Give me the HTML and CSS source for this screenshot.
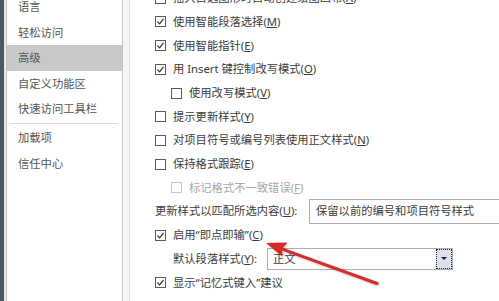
FILE: index.html
```html
<!DOCTYPE html>
<html lang="zh-CN">
<head>
  <meta charset="UTF-8">
  <title>Word 选项 - 高级</title>
  <link rel="stylesheet" href="styles.css">
</head>
<body>
  <div class="window">
    <div class="edge"></div>

    <!-- left navigation -->
    <nav class="sidebar">
      <div class="nav-item">语言</div>
      <div class="nav-item">轻松访问</div>
      <div class="nav-item active">高级</div>
      <div class="nav-item">自定义功能区</div>
      <div class="nav-item">快速访问工具栏</div>
      <div class="nav-sep"></div>
      <div class="nav-item">加载项</div>
      <div class="nav-item">信任中心</div>
    </nav>

    <div class="splitter"></div>

    <!-- editing options -->
    <main class="options">
      <div class="row">
        <span class="box"></span>
        <span>插入自选图形时自动创建绘图画布(<u>A</u>)</span>
      </div>
      <div class="row">
        <span class="box checked"><svg viewBox="0 0 9 9"><polyline points="1.5,4.5 3.6,6.8 7.6,1.8"/></svg></span>
        <span>使用智能段落选择(<u>M</u>)</span>
      </div>
      <div class="row">
        <span class="box checked"><svg viewBox="0 0 9 9"><polyline points="1.5,4.5 3.6,6.8 7.6,1.8"/></svg></span>
        <span>使用智能指针(<u>E</u>)</span>
      </div>
      <div class="row">
        <span class="box checked"><svg viewBox="0 0 9 9"><polyline points="1.5,4.5 3.6,6.8 7.6,1.8"/></svg></span>
        <span>用 Insert 键控制改写模式(<u>O</u>)</span>
      </div>
      <div class="row sub">
        <span class="box"></span>
        <span>使用改写模式(<u>V</u>)</span>
      </div>
      <div class="row">
        <span class="box"></span>
        <span>提示更新样式(<u>Y</u>)</span>
      </div>
      <div class="row">
        <span class="box"></span>
        <span>对项目符号或编号列表使用正文样式(<u>N</u>)</span>
      </div>
      <div class="row">
        <span class="box"></span>
        <span>保持格式跟踪(<u>E</u>)</span>
      </div>
      <div class="row sub disabled">
        <span class="box"></span>
        <span>标记格式不一致错误(<u>F</u>)</span>
      </div>
      <div class="row">
        <span class="label label-wide">更新样式以匹配所选内容(<u>U</u>):</span>
        <span class="field">保留以前的编号和项目符号样式</span>
      </div>
      <div class="row">
        <span class="box checked"><svg viewBox="0 0 9 9"><polyline points="1.5,4.5 3.6,6.8 7.6,1.8"/></svg></span>
        <span>启用“即点即输”(<u>C</u>)</span>
      </div>
      <div class="row sub-label">
        <span class="label label-short">默认段落样式(<u>Y</u>):</span>
        <span class="select">
          <span class="select-value">正文</span>
          <span class="select-btn"><span class="caret"></span></span>
        </span>
      </div>
      <div class="row">
        <span class="box checked"><svg viewBox="0 0 9 9"><polyline points="1.5,4.5 3.6,6.8 7.6,1.8"/></svg></span>
        <span>显示“记忆式键入”建议</span>
      </div>
    </main>

    <!-- red annotation arrow -->
    <svg class="arrow" viewBox="0 0 499 301" width="499" height="301">
      <line x1="377" y1="283.5" x2="283" y2="249.3"/>
      <polygon points="266,243 287.4,242.6 282,249 282.2,256.6"/>
    </svg>
  </div>
</body>
</html>
```

FILE: styles.css
```css
body {
  margin: 0;
  font-family: "Noto Sans", "Noto Sans CJK SC", sans-serif;
  font-size: 11.3px;
  background-color: #ffffff;
}
.window {
  display: flex;
  height: 301px;
  overflow: hidden;
  position: relative;
  background-color: #ffffff;
}
.edge {
  width: 4px;
  flex-shrink: 0;
  background-color: #4a5868;
  border-right: 2px solid #e6e6e6;
}
.sidebar {
  width: 115px;
  flex-shrink: 0;
  margin-top: -5.75px;
  border-left: 1px solid #c4c4c4;
  border-right: 1px solid #c4c4c4;
  background-color: #ffffff;
}
.nav-item {
  height: 25.5px;
  line-height: 25.5px;
  padding-left: 11px;
  color: #555555;
}
.nav-item.active {
  background-color: #c9c9c9;
}
.nav-sep {
  height: 1px;
  margin: 1.5px 4px 1px 3px;
  background-color: #d8d8d8;
}
.splitter {
  width: 6px;
  flex-shrink: 0;
  background-color: #f6f6f6;
  border-right: 1px solid #e2e2e2;
}
.options {
  flex: 1;
  min-width: 0;
  margin-top: -13.55px;
  padding-left: 25px;
  color: #3c3c3c;
  white-space: nowrap;
}
.row {
  height: 23.7px;
  line-height: 16px;
  display: flex;
  align-items: center;
}
.row.sub {
  padding-left: 16px;
}
.row.sub-label {
  padding-left: 18px;
}
.box {
  width: 11px;
  height: 11px;
  box-sizing: border-box;
  margin-right: 7px;
  flex-shrink: 0;
  border: 1px solid #5a5a5a;
  background-color: #ffffff;
  display: flex;
  align-items: center;
  justify-content: center;
}
.box svg {
  width: 9px;
  height: 9px;
}
.box polyline {
  fill: none;
  stroke: #333333;
  stroke-width: 1.2;
}
.disabled {
  color: #a8a8a8;
}
.disabled .box {
  border-color: #c4c4c4;
}
.label {
  flex-shrink: 0;
}
.label-wide {
  width: 154px;
}
.label-short {
  width: 94px;
}
.field {
  width: 220px;
  height: 25px;
  box-sizing: border-box;
  flex-shrink: 0;
  padding-left: 6px;
  border: 1px solid #abadb3;
  display: flex;
  align-items: center;
}
.select {
  width: 186px;
  height: 22px;
  box-sizing: border-box;
  flex-shrink: 0;
  border: 1px solid #abadb3;
  display: flex;
}
.select-value {
  flex: 1;
  padding-left: 5px;
  display: flex;
  align-items: center;
}
.select-btn {
  width: 16px;
  box-sizing: border-box;
  border: 1px dotted #222222;
  background-color: #dce2ec;
  display: flex;
  align-items: center;
  justify-content: center;
}
.caret {
  width: 0;
  height: 0;
  border-left: 3px solid transparent;
  border-right: 3px solid transparent;
  border-top: 3px solid #222222;
}
.arrow {
  position: absolute;
  top: 0;
  left: 0;
  pointer-events: none;
  filter: drop-shadow(1px 1.5px 1px rgba(0, 0, 0, 0.25));
}
.arrow line {
  stroke: #d82a2a;
  stroke-width: 3;
  stroke-linecap: round;
}
.arrow polygon {
  fill: #d82a2a;
}
```
